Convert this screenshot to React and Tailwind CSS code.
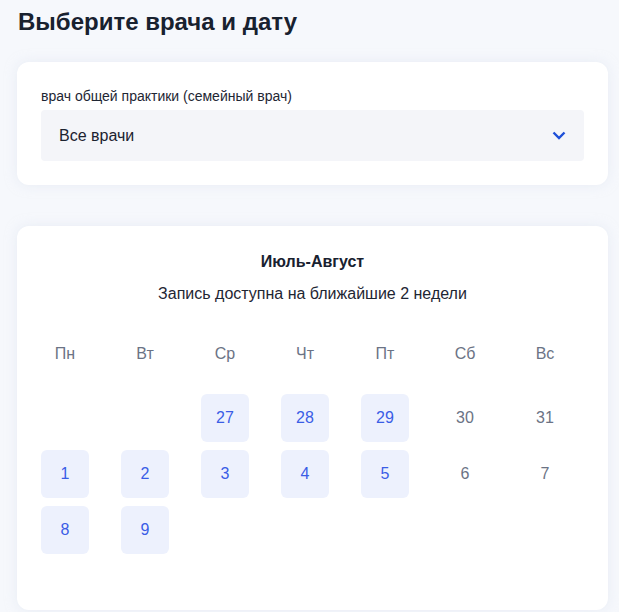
import React, { useState } from "react";

const WEEKDAYS = ["Пн", "Вт", "Ср", "Чт", "Пт", "Сб", "Вс"];

const DAYS = [
  null, null,
  { d: 27, on: true }, { d: 28, on: true }, { d: 29, on: true }, { d: 30 }, { d: 31 },
  { d: 1, on: true }, { d: 2, on: true }, { d: 3, on: true }, { d: 4, on: true }, { d: 5, on: true }, { d: 6 }, { d: 7 },
  { d: 8, on: true }, { d: 9, on: true },
];

const App = () => {
  const [selected, setSelected] = useState(null);

  return (
    <div
      className="min-h-screen bg-[#f6f8fc] pl-[17px] pr-[11px] pb-[3px]"
      style={{ fontFamily: '"Liberation Sans", Arial, sans-serif' }}
    >
      <h1 className="pt-[7px] pl-[1px] text-[24px] leading-[30px] font-bold text-[#18212f]">
        Выберите врача и дату
      </h1>

      <div className="mt-[25px] bg-white rounded-[12px] px-6 pt-6 pb-6 shadow-[0_0_12px_rgba(220,226,240,0.5)]">
        <label className="block text-[14px] leading-5 text-[#1e2633]">
          врач общей практики (семейный врач)
        </label>
        <button className="mt-1 w-full h-[51px] bg-[#f4f5f9] rounded-[4px] flex items-center justify-between pl-[18px] pr-[18px] text-left">
          <span className="text-[16px] text-[#1b2230]">Все врачи</span>
          <svg width="14" height="9" viewBox="0 0 14 9" fill="none">
            <path d="M1.5 1.5 L7 7 L12.5 1.5" stroke="#1d4fd8" strokeWidth="2.4" />
          </svg>
        </button>
      </div>

      <div className="mt-[41px] bg-white rounded-[12px] px-6 pt-[26px] pb-[56px] shadow-[0_0_12px_rgba(220,226,240,0.5)]">
        <div className="text-center text-[16px] leading-5 font-bold text-[#18212f]">Июль-Август</div>
        <div className="mt-[11px] text-center text-[16px] leading-[22px] text-[#1e2633]">
          Запись доступна на ближайшие 2 недели
        </div>

        <div className="mt-[39px] grid grid-cols-[repeat(7,48px)] gap-x-8 w-max">
          {WEEKDAYS.map((w) => (
            <div key={w} className="text-center text-[16px] leading-5 text-[#6b7385]">
              {w}
            </div>
          ))}
        </div>

        <div className="mt-[30px] grid grid-cols-[repeat(7,48px)] gap-x-8 gap-y-2 w-max">
          {DAYS.map((c, i) =>
            c ? (
              <button
                key={i}
                onClick={() => c.on && setSelected(c.d)}
                className={`h-12 w-12 rounded-[6px] flex items-center justify-center text-[16px] ${
                  c.on
                    ? selected === c.d
                      ? "bg-[#3b5ce6] text-white"
                      : "bg-[#edf1fd] text-[#3a5de6]"
                    : "text-[#6b7385]"
                }`}
              >
                {c.d}
              </button>
            ) : (
              <div key={i} className="h-12 w-12" />
            )
          )}
        </div>
      </div>
    </div>
  );
};

export default App;
